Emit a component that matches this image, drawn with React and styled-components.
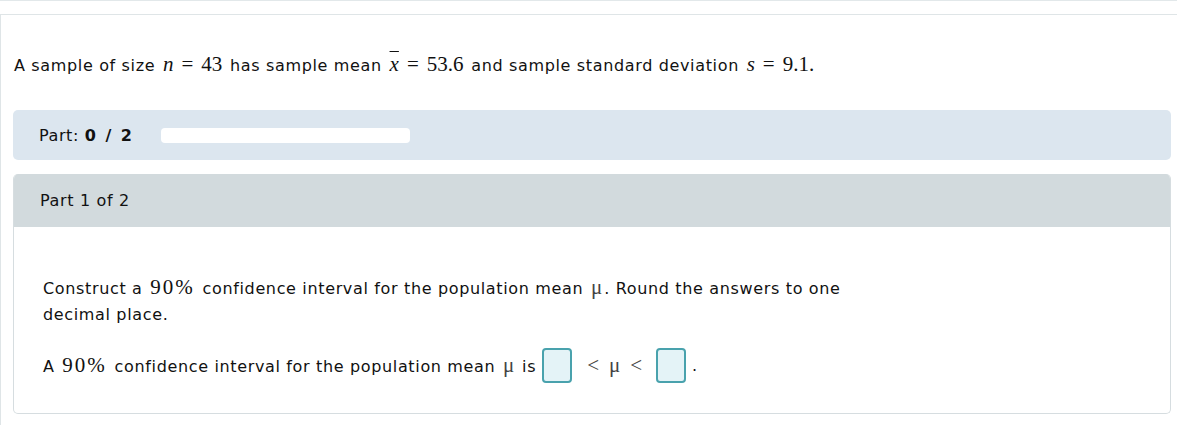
import styled, { createGlobalStyle } from "styled-components";

const GlobalStyle = createGlobalStyle`
  body {
    margin: 0;
    background: #fff;
    font-family: "DejaVu Sans", Verdana, sans-serif;
    font-size: 16px;
    letter-spacing: 0.65px;
    color: #111;
  }
`;

const TopRule = styled.div`
  height: 13px;
  border-top: 1px solid #e2e8ea;
`;

const Frame = styled.div`
  border-top: 1px solid #dfe5e7;
  border-left: 1px solid #dfe5e7;
  padding: 38px 6px 12px 12px;
`;

const Intro = styled.p`
  margin: 0 0 31px 1px;
  line-height: 26px;
`;

// inline math, set in a serif face like the rendered formulas
const M = styled.span`
  font-family: "Liberation Serif", "Times New Roman", serif;
  font-size: 21px;
  line-height: 1;
  letter-spacing: ${(p) => (p.$wide ? "2px" : "0")};
  margin: 0 2px;
  font-style: ${(p) => (p.$italic ? "italic" : "normal")};
  color: ${(p) => (p.$muted ? "#444" : "#111")};
  padding: 0 ${(p) => p.$pad || 0}px;
`;

const Bar = styled.span`
  text-decoration: overline;
  text-decoration-thickness: 1px;
`;

const PartBar = styled.div`
  display: flex;
  align-items: center;
  height: 50px;
  padding-left: 26px;
  background: #dce6ef;
  border-radius: 5px;
  margin-bottom: 14px;
`;

const PartLabel = styled.span`
  width: 122px;
  letter-spacing: 0.6px;
  b {
    font-weight: bold;
    letter-spacing: 2px;
  }
`;

const Progress = styled.div`
  width: 249px;
  height: 15px;
  background: #fff;
  border-radius: 4px;
`;

const Card = styled.section`
  border: 1px solid #d6dde0;
  border-top: none;
  border-radius: 5px;
  overflow: hidden;
`;

const CardHead = styled.div`
  display: flex;
  align-items: center;
  height: 53px;
  padding-left: 26px;
  background: #d2dadd;
`;

const CardBody = styled.div`
  padding: 49px 29px 30px;
`;

const Question = styled.p`
  margin: 0 0 20px;
  max-width: 830px;
  line-height: 26px;
`;

const AnswerRow = styled.div`
  display: flex;
  align-items: center;
  height: 35px;
`;

const AnswerBox = styled.span`
  display: inline-block;
  width: 26px;
  height: 31px;
  border: 2px solid #49a2ad;
  border-radius: 4px;
  background: #e4f3f7;
  margin: ${(p) => p.$margin};
`;

const Dot = styled.span`
  margin-left: 6px;
`;

export default function App() {
  return (
    <>
      <GlobalStyle />
      <TopRule />
      <Frame>
        <Intro>
          A sample of size <M $italic>n</M>
          <M $pad={4}>=</M>
          <M>43</M> has sample mean <M $italic><Bar>x</Bar></M>
          <M $pad={4}>=</M>
          <M>53.6</M> and sample standard deviation <M $italic>s</M>
          <M $pad={4}>=</M>
          <M>9.1.</M>
        </Intro>

        <PartBar>
          <PartLabel>
            Part: <b>0 / 2</b>
          </PartLabel>
          <Progress />
        </PartBar>

        <Card>
          <CardHead>Part 1 of 2</CardHead>
          <CardBody>
            <Question>
              Construct a <M $wide>90%</M> confidence interval for the population mean{" "}
              <M $muted>μ</M>. Round the answers to one decimal place.
            </Question>
            <AnswerRow>
              <span>
                A <M $wide>90%</M> confidence interval for the population mean <M $muted>μ</M> is
              </span>
              <AnswerBox $margin="0 13px 0 6px" />
              <M $muted>
                &lt;<M $pad={8} $muted>μ</M>&lt;
              </M>
              <AnswerBox $margin="0 0 0 12px" />
              <Dot>.</Dot>
            </AnswerRow>
          </CardBody>
        </Card>
      </Frame>
    </>
  );
}
